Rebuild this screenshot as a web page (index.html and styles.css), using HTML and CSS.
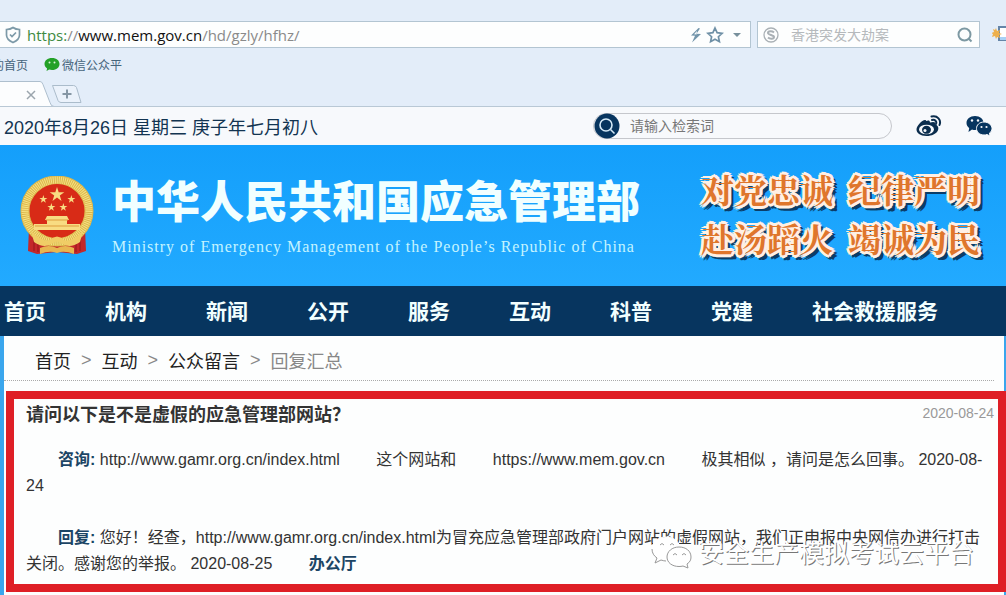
FILE: index.html
```html
<!DOCTYPE html>
<html lang="zh-CN">
<head>
    <meta charset="UTF-8">
    <meta name="viewport" content="width=device-width, initial-scale=1.0">
    <title>回复汇总 - 中华人民共和国应急管理部</title>
    <link rel="stylesheet" href="styles.css">
</head>
<body>
    <div class="browser">
        <div class="toolbar">
            <div class="address-bar">
                <svg class="shield" width="16" height="18" viewBox="0 0 16 18" fill="none" stroke="#7d9aa8" stroke-width="1.7">
                    <path d="M8 1.5C6 3 4 3.5 1.5 3.5V9c0 3.5 3 6 6.5 7.5C11.5 15 14.5 12.5 14.5 9V3.5C12 3.5 10 3 8 1.5z"></path>
                    <path d="M5 8.500l2 2 4-4"></path>
                </svg>
                <div class="url"><span class="url-scheme">https:</span>//<span class="url-host">www.mem.gov.cn</span>/hd/gzly/hfhz/</div>
                <button class="icon-button" aria-label="加速">
                    <svg width="12" height="16" viewBox="0 0 12 16" fill="#7395ab">
                        <path d="M8.500 1L1 8.500l4 .3L2 15.500 11 7l-4.500-.3L10 1.500z"></path>
                        <path d="M7 4L4 7.300l2.500.2z" fill="#fdfefe"></path>
                    </svg>
                </button>
                <button class="icon-button" aria-label="收藏">
                    <svg width="18" height="18" viewBox="0 0 18 18" fill="none" stroke="#6f90a6" stroke-width="1.7">
                        <path d="M9 2l2.100 4.700 5.100.6-3.800 3.400 1 5L9 13.200l-4.400 2.500 1-5L1.800 7.300l5.100-.6z"></path>
                    </svg>
                </button>
                <button class="icon-button" aria-label="展开">
                    <svg width="18" height="8" viewBox="0 0 18 8"><path d="M5 2h8L9 6z" fill="#78909c"></path></svg>
                </button>
            </div>
            <div class="quick-search">
                <svg width="16" height="16" viewBox="0 0 16 16" fill="none" stroke="#a9b0b5" stroke-width="1.3">
                    <circle cx="8" cy="8" r="7"></circle>
                    <path d="M11 5.500C9 3.800 5 4 5 6s6 2 6 4-4 2.300-6 .5" stroke-width="2"></path>
                </svg>
                <input class="quick-input" type="text" placeholder="香港突发大劫案" aria-label="搜索">
                <button class="icon-button" aria-label="搜索">
                    <svg width="16" height="16" viewBox="0 0 16 16" fill="none" stroke="#7d99a3" stroke-width="2">
                        <circle cx="7.500" cy="7.500" r="6"></circle>
                        <path d="M11.500 11.500l3 3"></path>
                    </svg>
                </button>
            </div>
            <svg class="extension" width="14" height="18" viewBox="0 0 14 18">
                <path d="M14 2H7v13h7" fill="#fff" stroke="#6585a8" stroke-width="2"></path>
                <path d="M8 12h6v3H8z" fill="#a8d0f5"></path>
                <path d="M4 3l1 3 3-1-1 3 3 1-3 1 1 3-3-1-1 2-1-3-3 1 1-3-2-1 3-1-1-3 2 1z" fill="#eeb04c"></path>
            </svg>
        </div>
        <div class="bookmarks">
            <a href="#" class="bookmark bookmark-cut">的首页</a>
            <a href="#" class="bookmark">
                <svg width="16" height="15" viewBox="0 0 16 15">
                    <path d="M8 1c4.500 0 7.500 2.600 7.500 6S12.500 13 8 13c-1 0-2-.1-2.800-.4L2.500 14l.6-2.500C1.500 10.400.5 8.800.5 7 .5 3.600 3.500 1 8 1z" fill="#23a127"></path>
                    <circle cx="5.500" cy="5.500" r="1" fill="#d9f5d5"></circle>
                    <circle cx="10.500" cy="5.500" r="1" fill="#d9f5d5"></circle>
                </svg>
                微信公众平
            </a>
        </div>
        <div class="tabs">
            <svg class="tab-shape" width="54" height="26" viewBox="0 0 54 26">
                <path d="M0 .5h40q2 0 3 3l7 18q1 4 4 4V26H0z" fill="#fcfdfe"></path>
                <path d="M0 .5h40q2 0 3 3l7 18q1 4 4 4" fill="none" stroke="#aebfce"></path>
                <path d="M27 10l8 8M35 10l-8 8" stroke="#9ba5ad" stroke-width="1.500"></path>
            </svg>
            <button class="icon-button new-tab" aria-label="新标签页">
                <svg width="32" height="20" viewBox="0 0 32 20" fill="none">
                    <path d="M1.500 1.500h21q2 0 3 2l4.500 15H10q-2 0-3-2z" fill="#ebf2fb" stroke="#abbccb"></path>
                    <path d="M16 5.500v9M11.500 10h9" stroke="#8697a5" stroke-width="2"></path>
                </svg>
            </button>
        </div>
    </div>

    <div class="top-row">
        <p class="date">2020年8月26日 星期三 庚子年七月初八</p>
        <form class="site-search">
            <button class="search-button" type="button" aria-label="检索">
                <svg width="26" height="26" viewBox="0 0 26 26" fill="none" stroke="#d5eaf8" stroke-width="1.6">
                    <circle cx="13" cy="13" r="12.500" fill="#07355f" stroke="none"></circle>
                    <circle cx="12" cy="12" r="6"></circle>
                    <path d="M16.500 16.500l4 4"></path>
                </svg>
            </button>
            <input class="search-input" type="text" placeholder="请输入检索词" aria-label="请输入检索词">
        </form>
        <a href="#" class="social" aria-label="微博">
            <svg width="26" height="22" viewBox="0 0 26 22">
                <path d="M10 6c2-1 4-1 4 1.500 3-1 6-1 5.500 2 6 2.500 2.500 11.500-9 11.500C4 21 .5 18 .5 14.500.5 11 6 5 9 5q1.500 0 1 1z" fill="#0b2d4d"></path>
                <ellipse cx="10.500" cy="14.500" rx="7.500" ry="4.800" fill="#f7f9fc"></ellipse>
                <ellipse cx="10.500" cy="14.800" rx="4.500" ry="4" fill="#0b2d4d"></ellipse>
                <circle cx="9" cy="15.500" r="1.500" fill="#f7f9fc"></circle>
                <path d="M15.500 1.500c6-1.500 10 3.500 8 8.500M16 5c3-.8 5 1.500 4 4" fill="none" stroke="#0b2d4d" stroke-width="2" stroke-linecap="round"></path>
            </svg>
        </a>
        <a href="#" class="social" aria-label="微信">
            <svg width="26" height="22" viewBox="0 0 26 22">
                <path d="M9 1c5 0 8.500 3 8.500 7S14 15 9 15q-1.500 0-3-.5L2.500 17l.7-4C1.500 11.700.5 10 .5 8c0-4 3.500-7 8.500-7z" fill="#07355f"></path>
                <path d="M18 7c4.500 0 8 3 8 6.500 0 2-1 3.500-2.500 4.500l.5 3-3-1.500q-1.500.5-3 .5c-4.500 0-7.500-3-7.500-6.500S13.500 7 18 7z" fill="#07355f" stroke="#f7f9fc"></path>
                <g fill="#f7f9fc">
                    <circle cx="6" cy="5.500" r="1.200"></circle>
                    <circle cx="12" cy="5.500" r="1.200"></circle>
                    <circle cx="15.500" cy="12" r="1.100"></circle>
                    <circle cx="20.500" cy="12" r="1.100"></circle>
                </g>
            </svg>
        </a>
    </div>

    <header class="banner">
        <svg class="emblem" width="74" height="80" viewBox="0 0 74 80">
            <path d="M9 52L8 75l9 3 20-2 20 2 9-3-1-23z" fill="#c4282a"></path>
            <path d="M14 60v15M60 60v15M18 66v10M56 66v10" stroke="#a51c20" stroke-width="1.500"></path>
            <ellipse cx="37" cy="35" rx="32" ry="31" fill="#d82b17" stroke="#dcb64c" stroke-width="9"></ellipse>
            <ellipse cx="37" cy="35" rx="32" ry="31" fill="none" stroke="#f5e283" stroke-width="7" stroke-dasharray="1 1"></ellipse>
            <circle cx="37" cy="35" r="27" fill="#d82b17"></circle>
            <g fill="#f8dc82">
                <path id="star" d="M37 11l1.700 5.300h5.600l-4.500 3.300 1.700 5.300-4.500-3.300-4.500 3.300 1.700-5.300-4.500-3.300h5.600z"></path>
                <use href="#star" transform="translate(3 13) scale(.55)"></use>
                <use href="#star" transform="translate(31 13) scale(.55)"></use>
                <use href="#star" transform="translate(11 21) scale(.55)"></use>
                <use href="#star" transform="translate(23 21) scale(.55)"></use>
                <path d="M27 40h20l2 4h-2v4h13v6H14v-6h13v-4h-2z"></path>
            </g>
            <path d="M26 44h22M15 50h44" stroke="#dd9d3d"></path>
            <path d="M11 55q13 13 19 9 7-7 14 0 6 4 19-9l-3 11q-10 7-17 2-6-5-12 0-7 5-17-2z" fill="#f0cd66"></path>
            <path d="M20 72q9-4 17 0 8-4 17 0v6q-10-4-17-1-7-3-17 1z" fill="#e8b650"></path>
        </svg>
        <div class="banner-title">
            <h1 class="site-name">中华人民共和国应急管理部</h1>
            <p class="site-name-en">Ministry of Emergency Management of the People’s Republic of China</p>
        </div>
        <div class="slogan">
            <span>对党忠诚</span>
            <span>纪律严明</span>
            <span>赴汤蹈火</span>
            <span>竭诚为民</span>
        </div>
    </header>

    <nav class="main-nav">
        <a href="#">首页</a>
        <a href="#">机构</a>
        <a href="#">新闻</a>
        <a href="#">公开</a>
        <a href="#">服务</a>
        <a href="#">互动</a>
        <a href="#">科普</a>
        <a href="#">党建</a>
        <a href="#">社会救援服务</a>
    </nav>

    <main class="page">
        <div class="breadcrumb">
            <a href="#">首页</a>
            <span class="separator">&gt;</span>
            <a href="#">互动</a>
            <span class="separator">&gt;</span>
            <a href="#">公众留言</a>
            <span class="separator">&gt;</span>
            <span class="current">回复汇总</span>
        </div>

        <article class="message">
            <div class="message-header">
                <h2 class="message-title">请问以下是不是虚假的应急管理部网站？</h2>
                <time class="message-date">2020-08-24</time>
            </div>
            <p class="message-text"><b>咨询:</b> http://www.gamr.org.cn/index.html <span class="spaced">这个网站和</span> <span class="spaced">https://www.mem.gov.cn</span> <span class="spaced">极其相似</span> ，请问是怎么回事。 2020-08-24</p>
            <p class="message-text"><b>回复:</b> 您好！经查，http://www.gamr.org.cn/index.html为冒充应急管理部政府门户网站的虚假网站，我们正申报中央网信办进行打击关闭。感谢您的举报。 2020-08-25 <b class="spaced">办公厅</b></p>
            <div class="watermark">
                <svg width="42" height="34" viewBox="0 0 42 34" fill="#fff" stroke="#999">
                    <path d="M15 1c8 0 14 5 14 12s-6 12-14 12q-3 0-5-1l-6 3 2-5C3 20 1 17 1 13 1 6 7 1 15 1z" stroke="#fff"></path>
                    <path d="M1 13c0 4 2 7 5 9l-2 5 6-3q3 1 5 1" fill="none"></path>
                    <path d="M28 11c7 0 12 4 12 10 0 3-1 5-4 7l1 4-5-2q-2 .5-4 .5c-7 0-12-4-12-9.500S21 11 28 11z"></path>
                    <path d="M9 9q2-3 4 0M19 9q2-3 4 0M22 19q2-3 4 0M31 19q2-3 4 0" fill="none"></path>
                </svg>
                <span>安全生产模拟考试云平台</span>
            </div>
        </article>
    </main>
</body>
</html>
```
FILE: styles.css
```css
* {
    margin: 0;
    padding: 0;
    box-sizing: border-box;
}

body {
    font-family: "Liberation Sans", "Noto Sans CJK SC", sans-serif;
    background-color: #fdfefe;
    color: #333;
    min-height: 100vh;
    display: flex;
    flex-direction: column;
}

a {
    color: inherit;
    text-decoration: none;
}

svg {
    display: block;
    flex-shrink: 0;
}

button {
    border: none;
    background: none;
    cursor: pointer;
}

input {
    border: none;
    outline: none;
    background: none;
    min-width: 0;
    font-family: inherit;
}

/* browser chrome */
.browser {
    background-color: #e3edf9;
    border-bottom: 1px solid #b9c8d5;
    padding-top: 21px;
    overflow: hidden;
}

.toolbar {
    display: flex;
    height: 27px;
}

.address-bar,
.quick-search {
    display: flex;
    align-items: center;
    background-color: #fdfefe;
    border: 1px solid #b3c5d2;
}

.address-bar {
    flex: 1;
    border-left: none;
    padding: 0 4px 0 5px;
    gap: 4px;
}

.url {
    flex: 1;
    font-family: "Open Sans", sans-serif;
    font-size: 15px;
    color: #8a8a8a;
    padding-left: 2px;
}

.url-scheme {
    color: #3c8a41;
}

.url-host {
    color: #111;
}

.quick-search {
    width: 223px;
    margin-left: 6px;
    padding: 0 6px 0 5px;
}

.quick-input {
    flex: 1;
    padding-left: 12px;
    font-size: 14px;
}

.quick-input::placeholder {
    color: #b5b9bc;
}

.extension {
    margin: 4px 0 0 12px;
}

.bookmarks {
    display: flex;
    align-items: center;
    gap: 16px;
    height: 33px;
    font-size: 12px;
    color: #45647b;
}

.bookmark {
    display: flex;
    align-items: center;
    gap: 2px;
}

.bookmark-cut {
    width: 28px;
    justify-content: flex-end;
    white-space: nowrap;
}

.tabs {
    display: flex;
    height: 25px;
}

.new-tab {
    align-self: center;
    margin-left: -3px;
}

/* date and search row */
.top-row {
    display: flex;
    align-items: center;
    height: 38px;
    padding: 0 14px 0 4px;
    background-color: #f7f9fc;
}

.date {
    flex: 1;
    font-size: 18px;
    color: #123451;
}

.site-search {
    display: flex;
    align-items: center;
    width: 299px;
    height: 26px;
    border: 1px solid #c5c7cc;
    border-radius: 13px;
}

.search-button {
    border-radius: 50%;
}

.search-input {
    flex: 1;
    padding-left: 10px;
    font-size: 14px;
}

.search-input::placeholder {
    color: #777;
}

.social {
    margin-left: 24px;
}

/* banner */
.banner {
    display: flex;
    align-items: center;
    height: 141px;
    padding: 0 26px 0 20px;
    background: linear-gradient(#149ffb, #22aaff);
}

.banner-title {
    flex: 1;
    padding: 6px 0 0 18px;
    color: #f1ffff;
    white-space: nowrap;
}

.site-name {
    font-size: 44px;
    font-weight: 900;
    line-height: 56px;
}

.site-name-en {
    font-family: "Liberation Serif", serif;
    font-size: 16px;
    line-height: 32px;
    letter-spacing: 1px;
    color: #c5f4ff;
}

.slogan {
    display: grid;
    grid-template-columns: auto auto;
    column-gap: 15px;
    padding-bottom: 6px;
    font-family: "Noto Serif CJK SC", "Noto Sans CJK SC", serif;
    font-size: 33px;
    font-weight: bold;
    line-height: 49px;
    color: #df762c;
    white-space: nowrap;
    text-shadow: -2px 0 #fff0e4, 2px 0 #fff0e4, 0 -2px #fff0e4, 0 2px #fff0e4,
        -2px -2px #fff0e4, 2px -2px #fff0e4, -2px 2px #fff0e4, 2px 2px #fff0e4,
        -3px 0 #fff0e4, 3px 0 #fff0e4, 0 -3px #fff0e4, 0 3px #fff0e4,
        4px 4px #0b3d68, 5px 5px #0b3d68, 2px 5px #0b3d68, 5px 2px #0b3d68;
}

/* navigation */
.main-nav {
    display: flex;
    align-items: center;
    gap: 59px;
    height: 50px;
    padding: 0 0 2px 4px;
    background-color: #07355f;
    color: #f2ffff;
    font-size: 21px;
    font-weight: bold;
    white-space: nowrap;
}

/* content */
.page {
    flex: 1;
    border-left: 4px solid #3aa6ed;
    border-right: 2px solid #3aa6ed;
    padding-bottom: 4px;
}

.breadcrumb {
    display: flex;
    align-items: center;
    gap: 10px;
    height: 45px;
    margin: 0 10px 10px 0;
    padding: 4px 0 0 31px;
    border-bottom: 1px dotted #aaa;
    font-size: 18px;
    color: #222;
}

.separator,
.current {
    color: #888;
}

.message {
    position: relative;
    margin: 0 -2px 0 2px;
    padding: 0 4px 7px 12px;
    border: 8px solid #df1f26;
}

.message-header {
    display: flex;
    align-items: center;
    justify-content: space-between;
    height: 28px;
    margin-bottom: 20px;
}

.message-title {
    font-size: 18px;
    color: #333;
}

.message-date {
    font-size: 14px;
    color: #999;
}

.message-text {
    font-size: 16px;
    line-height: 26px;
    text-indent: 32px;
}

.message-text + .message-text {
    margin-top: 26px;
}

.message-text b {
    color: #1c4565;
}

.spaced {
    margin-left: 32px;
}

.watermark {
    position: absolute;
    right: 24px;
    bottom: 14px;
    display: flex;
    align-items: center;
    gap: 6px;
    font-size: 25px;
    line-height: 34px;
    color: #fff;
    text-shadow: 1px 1px #777;
}
```
